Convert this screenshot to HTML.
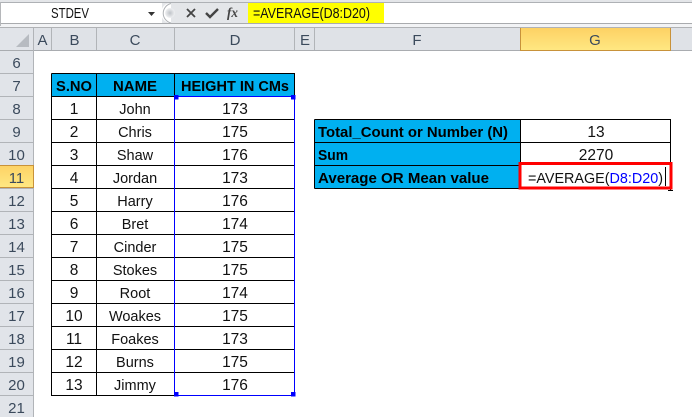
<!DOCTYPE html>
<html><head><meta charset="utf-8"><style>
html,body{margin:0;padding:0;width:692px;height:417px;overflow:hidden;background:#fff}
svg{display:block}
text{font-family:"Liberation Sans",sans-serif;font-size:14.5px;fill:#111}
.h{fill:#3b4a5c;font-size:15px;text-anchor:middle}
.c{text-anchor:middle}
.d{text-anchor:middle;font-size:15.5px}
.b{font-weight:bold;fill:#000;font-size:14.5px}
</style></head><body>
<svg width="692" height="417" viewBox="0 0 692 417" xmlns="http://www.w3.org/2000/svg">
<defs><linearGradient id="g" x1="0" y1="0" x2="0" y2="1"><stop offset="0" stop-color="#fdd164"/><stop offset="1" stop-color="#ffe883"/></linearGradient>
<radialGradient id="k"><stop offset="0" stop-color="#bfc3c8"/><stop offset="1" stop-color="#f0f1f3"/></radialGradient></defs>
<rect x="0" y="0" width="692" height="28" fill="#f2f3f5"/>
<rect x="0" y="0" width="692" height="2" fill="#e4e6e9"/>
<rect x="0" y="2" width="692" height="21.500" fill="#fff"/>
<rect x="0" y="2" width="692" height="1" fill="#aeb1b5"/>
<rect x="0" y="23" width="692" height="1" fill="#a9abae"/>
<rect x="0" y="27" width="692" height="1" fill="#b0b2b5"/>
<rect x="0" y="2" width="1" height="24" fill="#b5b7ba"/>
<rect x="162" y="3" width="86" height="20" fill="#e4e6e9"/>
<path d="M148 12h7l-3.500 4z" fill="#333"/>
<path d="M171 3a10 10 0 0 0 0 20z" fill="#fff"/>
<path d="M171 3.500a10 10 0 0 0 0 19.500" fill="none" stroke="#aeb1b5"/>
<circle cx="170" cy="13" r="5" fill="url(#k)"/>
<path d="M187 9l8 8M195 9l-8 8" stroke="#444" stroke-width="1.800" fill="none"/>
<path d="M206 13l4 4 8-8" stroke="#444" stroke-width="2.400" fill="none"/>
<text x="227" y="17" style="font-family:'Liberation Serif',serif;font-style:italic;font-weight:bold;font-size:14px;fill:#444" textLength="11" lengthAdjust="spacingAndGlyphs">fx</text>
<rect x="248" y="3" width="136" height="20" fill="#ffff00"/>
<text x="253" y="18" style="font-size:15px" textLength="117" lengthAdjust="spacingAndGlyphs">=AVERAGE(D8:D20)</text>
<text x="51" y="18" style="font-size:15px" textLength="38" lengthAdjust="spacingAndGlyphs">STDEV</text>

<rect x="0" y="28" width="692" height="23" fill="#dfe2e7"/>
<rect x="0" y="28" width="34" height="389" fill="#e1e4e9"/>
<path d="M16 47h13v-13z" fill="#b7bbc1"/>
<rect x="520" y="28" width="151" height="23" fill="url(#g)"/>
<rect x="0" y="50" width="692" height="1" fill="#a9acb0"/>
<g fill="#b1b4b8">
<rect x="33" y="28" width="1" height="389"/>
<rect x="51" y="28" width="1" height="22"/><rect x="96" y="28" width="1" height="22"/>
<rect x="174" y="28" width="1" height="22"/><rect x="294" y="28" width="1" height="22"/>
<rect x="314" y="28" width="1" height="22"/>
<rect x="0" y="73" width="33" height="1"/><rect x="0" y="96" width="33" height="1"/>
<rect x="0" y="119" width="33" height="1"/><rect x="0" y="142" width="33" height="1"/>
<rect x="0" y="165" width="33" height="1"/><rect x="0" y="188" width="33" height="1"/>
<rect x="0" y="211" width="33" height="1"/><rect x="0" y="234" width="33" height="1"/>
<rect x="0" y="257" width="33" height="1"/><rect x="0" y="280" width="33" height="1"/>
<rect x="0" y="303" width="33" height="1"/><rect x="0" y="326" width="33" height="1"/>
<rect x="0" y="349" width="33" height="1"/><rect x="0" y="372" width="33" height="1"/>
<rect x="0" y="395" width="33" height="1"/>
</g>
<rect x="0" y="165" width="34" height="23" fill="url(#g)"/>
<rect x="33" y="165" width="1" height="23" fill="#c8923a"/><rect x="0" y="165" width="34" height="1" fill="#c8923a"/><rect x="0" y="187" width="34" height="1" fill="#c8923a"/>
<rect x="520" y="28" width="1" height="23" fill="#c8923a"/><rect x="670" y="28" width="1" height="23" fill="#c8923a"/><rect x="520" y="50" width="151" height="1" fill="#c8923a"/>

<text class="h" x="42.500" y="45">A</text><text class="h" x="74.500" y="45">B</text><text class="h" x="135" y="45">C</text><text class="h" x="235" y="45">D</text><text class="h" x="305" y="45">E</text><text class="h" x="417" y="45">F</text><text class="h" x="595" y="45">G</text>
<text class="h" x="16.500" y="68">6</text><text class="h" x="16.500" y="91">7</text><text class="h" x="16.500" y="114">8</text><text class="h" x="16.500" y="137">9</text>
<text class="h" x="16.500" y="160">10</text><text class="h" x="16.500" y="183">11</text><text class="h" x="16.500" y="206">12</text><text class="h" x="16.500" y="229">13</text>
<text class="h" x="16.500" y="252">14</text><text class="h" x="16.500" y="275">15</text><text class="h" x="16.500" y="298">16</text><text class="h" x="16.500" y="321">17</text>
<text class="h" x="16.500" y="344">18</text><text class="h" x="16.500" y="367">19</text><text class="h" x="16.500" y="390">20</text><text class="h" x="16.500" y="413">21</text>

<rect x="51.500" y="73.500" width="243" height="23" fill="#00b0f0"/>
<g stroke="#000" stroke-width="1" fill="none">
<path d="M51.500 73.500H294.500V96M51.500 73.500V395.500H174.500M96.500 73.500V395.500M174.500 73.500V96"/>
<path d="M51.500 96.500H174.500M51.500 119.500H294.500M51.500 142.500H294.500M51.500 165.500H294.500M51.500 188.500H294.500M51.500 211.500H294.500M51.500 234.500H294.500M51.500 257.500H294.500M51.500 280.500H294.500M51.500 303.500H294.500M51.500 326.500H294.500M51.500 349.500H294.500M51.500 372.500H294.500"/>
</g>
<rect x="174.500" y="96.500" width="120" height="299" fill="none" stroke="#0000ff"/>
<g fill="#0000ff"><rect x="174" y="95" width="4.500" height="4.500"/><rect x="291" y="95" width="4.500" height="4.500"/><rect x="174" y="392" width="4.500" height="4.500"/><rect x="291" y="392" width="4.500" height="4.500"/></g>

<text class="c b" x="74" y="91" textLength="36" lengthAdjust="spacingAndGlyphs">S.NO</text>
<text class="c b" x="135" y="91" textLength="44" lengthAdjust="spacingAndGlyphs">NAME</text>
<text class="c b" x="235" y="91" textLength="108" lengthAdjust="spacingAndGlyphs">HEIGHT IN CMs</text>

<text class="d" x="74" y="114">1</text><text class="c" x="135" y="114">John</text><text class="d" x="235" y="114">173</text>
<text class="d" x="74" y="137">2</text><text class="c" x="135" y="137">Chris</text><text class="d" x="235" y="137">175</text>
<text class="d" x="74" y="160">3</text><text class="c" x="135" y="160">Shaw</text><text class="d" x="235" y="160">176</text>
<text class="d" x="74" y="183">4</text><text class="c" x="135" y="183">Jordan</text><text class="d" x="235" y="183">173</text>
<text class="d" x="74" y="206">5</text><text class="c" x="135" y="206">Harry</text><text class="d" x="235" y="206">176</text>
<text class="d" x="74" y="229">6</text><text class="c" x="135" y="229">Bret</text><text class="d" x="235" y="229">174</text>
<text class="d" x="74" y="252">7</text><text class="c" x="135" y="252">Cinder</text><text class="d" x="235" y="252">175</text>
<text class="d" x="74" y="275">8</text><text class="c" x="135" y="275">Stokes</text><text class="d" x="235" y="275">175</text>
<text class="d" x="74" y="298">9</text><text class="c" x="135" y="298">Root</text><text class="d" x="235" y="298">174</text>
<text class="d" x="74" y="321">10</text><text class="c" x="135" y="321">Woakes</text><text class="d" x="235" y="321">175</text>
<text class="d" x="74" y="344">11</text><text class="c" x="135" y="344">Foakes</text><text class="d" x="235" y="344">173</text>
<text class="d" x="74" y="367">12</text><text class="c" x="135" y="367">Burns</text><text class="d" x="235" y="367">175</text>
<text class="d" x="74" y="390">13</text><text class="c" x="135" y="390">Jimmy</text><text class="d" x="235" y="390">176</text>

<rect x="314.500" y="119.500" width="206" height="69" fill="#00b0f0"/>
<path d="M314.500 119.500H670.500V165M314.500 142.500H670.500M314.500 165.500H670.500M314.500 188.500H520M314.500 119.500V188.500M520.500 119.500V188.500" stroke="#000" fill="none"/>
<text class="b" x="318" y="137" textLength="190" lengthAdjust="spacingAndGlyphs">Total_Count or Number (N)</text>
<text class="b" x="318" y="160" textLength="30" lengthAdjust="spacingAndGlyphs">Sum</text>
<text class="b" x="318" y="183" textLength="171" lengthAdjust="spacingAndGlyphs">Average OR Mean value</text>
<text class="d" x="596" y="137">13</text>
<text class="d" x="596" y="160">2270</text>
<rect x="520" y="163" width="152" height="25" fill="#fff"/>
<path d="M670.500 166V190.500M668 190.500h5" stroke="#000" fill="none"/>
<rect x="520" y="163.500" width="151" height="24.500" fill="none" stroke="#ff0000" stroke-width="3"/>
<text x="528" y="183" style="font-size:15px" textLength="135" lengthAdjust="spacingAndGlyphs">=AVERAGE(<tspan fill="#0000ff">D8:D20</tspan>)</text>
<rect x="665" y="167" width="1" height="19" fill="#000"/>
</svg>
</body></html>
